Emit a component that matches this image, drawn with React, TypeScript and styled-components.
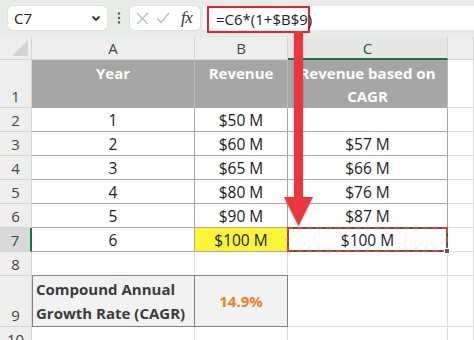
import React from 'react';
import styled, { createGlobalStyle, css } from 'styled-components';

const GlobalStyle = createGlobalStyle`
  html, body { margin: 0; padding: 0; background: #ffffff; }
  body { font-family: 'Open Sans', 'Noto Sans', sans-serif; overflow: hidden; }
  * { box-sizing: border-box; }
`;

const Page = styled.div`
  position: relative;
  width: 474px;
  height: 340px;
  overflow: hidden;
  background: #ffffff;
`;

const TopBar = styled.div`
  height: 37px;
  background: #e8ece8;
  display: flex;
  align-items: flex-start;
  padding: 6px 0 0 8px;
`;

const NameBox = styled.div`
  width: 99px;
  height: 24px;
  background: #ffffff;
  border-radius: 5px;
  box-shadow: 0 0 0 1px #dfe3df;
  display: flex;
  align-items: center;
  justify-content: space-between;
  padding: 0 6px 0 6px;
  font-size: 15px;
  color: #222;
`;

const Dots = styled.div`
  width: 23px;
  height: 24px;
  display: flex;
  align-items: center;
  justify-content: center;
`;

const FxBox = styled.div`
  width: 70px;
  height: 24px;
  background: #ffffff;
  border-radius: 5px;
  box-shadow: 0 0 0 1px #dfe3df;
  display: flex;
  align-items: center;
  padding: 0 4px 0 6px;
  gap: 7px;
`;

const FxLabel = styled.span`
  font-family: 'Liberation Serif', 'DejaVu Serif', serif;
  font-style: italic;
  font-size: 17px;
  color: #333;
  margin-left: 4px;
  letter-spacing: -0.5px;
`;

const FormulaArea = styled.div`
  flex: 1;
  height: 24px;
  margin-left: 3px;
  background: #ffffff;
  display: flex;
  align-items: center;
  padding-left: 4px;
`;

const FormulaHighlight = styled.div`
  height: 27px;
  width: 103px;
  border: 2.5px solid #e0262c;
  display: flex;
  align-items: center;
  padding-left: 7px;
  font-size: 15px;
  color: #222;
  white-space: nowrap;
  margin-top: 2px;
`;

const Sheet = styled.div`
  display: grid;
  grid-template-columns: 32px 163px 93px 160px 1fr;
  grid-template-rows: 23px 48px repeat(7, 24px) 51px 24px;
`;

const Corner = styled.div`
  position: relative;
  background: #eeeeee;
  border-right: 1px solid #d4d4d4;
  border-bottom: 1px solid #d4d4d4;
  &::after {
    content: '';
    position: absolute;
    right: 3px;
    bottom: 3px;
    width: 0;
    height: 0;
    border-left: 16px solid transparent;
    border-bottom: 16px solid #d3d3d3;
  }
`;

const ColHead = styled.div<{ $selected?: boolean }>`
  background: #eeeeee;
  border-right: 1px solid #d4d4d4;
  border-bottom: 1px solid #d4d4d4;
  display: flex;
  align-items: center;
  justify-content: center;
  font-size: 15px;
  color: #444;
  ${(p) =>
    p.$selected &&
    css`
      background: #e6e6e6;
      border-bottom: 2px solid #1e7145;
      color: #1e5c3a;
    `}
`;

const RowHead = styled.div<{ $selected?: boolean }>`
  background: #eeeeee;
  border-right: 1px solid #d4d4d4;
  border-bottom: 1px solid #d4d4d4;
  display: flex;
  align-items: flex-end;
  justify-content: center;
  padding-bottom: 1px;
  font-size: 15px;
  line-height: 20px;
  color: #444;
  ${(p) =>
    p.$selected &&
    css`
      background: #d9d9d9;
      border-right: 2px solid #1e7145;
    `}
`;

const HeadCell = styled.div`
  background: #a6a6a6;
  border-right: 1px solid #bdbdbd;
  color: #ffffff;
  font-weight: 700;
  font-size: 15px;
  line-height: 23px;
  text-align: center;
  padding: 2px 4px 0;
`;

const DataCell = styled.div<{ $bg?: string }>`
  background: ${(p) => p.$bg || '#ffffff'};
  border-right: 1px solid #a8a8a8;
  border-bottom: 1px solid #a8a8a8;
  display: flex;
  align-items: center;
  justify-content: center;
  font-size: 15.5px;
  color: #222;
`;

const CopyCell = styled(DataCell)`
  position: relative;
  border: 2px solid #2f6b40;
  margin: -1px 0 0 -1px;
  &::after {
    content: '';
    position: absolute;
    inset: -2px;
    border: 2px dashed #e2383d;
  }
`;

const FillHandle = styled.span`
  position: absolute;
  right: -4px;
  bottom: -4px;
  width: 6px;
  height: 6px;
  background: #5b5b5b;
  border: 1px solid #ffffff;
  z-index: 2;
`;

const Blank = styled.div`
  border-right: 1px solid #dcdcdc;
  border-bottom: 1px solid #dcdcdc;
`;

const LabelCell = styled.div`
  background: #f2f2f2;
  border: 1px solid #808080;
  margin-top: -1px;
  font-weight: 700;
  font-size: 15px;
  line-height: 24px;
  color: #3b3b3b;
  padding: 1px 0 0 3px;
  white-space: nowrap;
  overflow: hidden;
`;

const ValueCell = styled.div`
  background: #f2f2f2;
  border: 1px solid #808080;
  border-left: none;
  margin-top: -1px;
  display: flex;
  align-items: center;
  justify-content: center;
  font-weight: 700;
  font-size: 15px;
  color: #ee7d22;
`;

const ArrowSvg = styled.svg`
  position: absolute;
  left: 282px;
  top: 31px;
`;

const data = [
  { year: '1', rev: '$50 M', cagr: '' },
  { year: '2', rev: '$60 M', cagr: '$57 M' },
  { year: '3', rev: '$65 M', cagr: '$66 M' },
  { year: '4', rev: '$80 M', cagr: '$76 M' },
  { year: '5', rev: '$90 M', cagr: '$87 M' },
  { year: '6', rev: '$100 M', cagr: '$100 M' },
];

export default function App() {
  return (
    <Page>
      <GlobalStyle />
      <TopBar>
        <NameBox>
          <span>C7</span>
          <svg width="10" height="7" viewBox="0 0 10 7">
            <path d="M1.5 1.5 L5 5 L8.5 1.5" fill="none" stroke="#333" strokeWidth="1.8" />
          </svg>
        </NameBox>
        <Dots>
          <svg width="4" height="12" viewBox="0 0 4 12">
            <circle cx="2" cy="1.5" r="1.2" fill="#555" />
            <circle cx="2" cy="6" r="1.2" fill="#555" />
            <circle cx="2" cy="10.5" r="1.2" fill="#555" />
          </svg>
        </Dots>
        <FxBox>
          <svg width="13" height="13" viewBox="0 0 13 13">
            <path d="M1 1 L12 12 M12 1 L1 12" stroke="#b9b9b9" strokeWidth="1.2" fill="none" />
          </svg>
          <svg width="14" height="12" viewBox="0 0 14 12">
            <path d="M1 6.5 L5 10.5 L13 1" stroke="#b9b9b9" strokeWidth="1.2" fill="none" />
          </svg>
          <FxLabel>fx</FxLabel>
        </FxBox>
        <FormulaArea>
          <FormulaHighlight>=C6*(1+$B$9)</FormulaHighlight>
        </FormulaArea>
      </TopBar>
      <Sheet>
        <Corner />
        <ColHead>A</ColHead>
        <ColHead>B</ColHead>
        <ColHead $selected>C</ColHead>
        <ColHead />

        <RowHead>1</RowHead>
        <HeadCell>Year</HeadCell>
        <HeadCell>Revenue</HeadCell>
        <HeadCell>Revenue based on CAGR</HeadCell>
        <Blank />

        {data.map((d, i) => {
          const last = i === data.length - 1;
          return (
            <React.Fragment key={d.year}>
              <RowHead $selected={last}>{i + 2}</RowHead>
              <DataCell>{d.year}</DataCell>
              <DataCell $bg={last ? '#fdf43a' : undefined}>{d.rev}</DataCell>
              {last ? (
                <CopyCell>
                  {d.cagr}
                  <FillHandle />
                </CopyCell>
              ) : (
                <DataCell>{d.cagr}</DataCell>
              )}
              <Blank />
            </React.Fragment>
          );
        })}

        <RowHead>8</RowHead>
        <Blank />
        <Blank />
        <Blank />
        <Blank />

        <RowHead>9</RowHead>
        <LabelCell>
          Compound Annual
          <br />
          Growth Rate (CAGR)
        </LabelCell>
        <ValueCell>14.9%</ValueCell>
        <Blank />
        <Blank />

        <RowHead>10</RowHead>
        <Blank />
        <Blank />
        <Blank />
        <Blank />
      </Sheet>
      <ArrowSvg width="34" height="200" viewBox="0 0 34 200">
        <defs>
          <filter id="sh" x="-30%" y="-5%" width="160%" height="110%">
            <feDropShadow dx="0" dy="1" stdDeviation="1" floodColor="#000" floodOpacity="0.25" />
          </filter>
        </defs>
        <g filter="url(#sh)">
          <rect x="12" y="0" width="9" height="167" fill="#e8383d" />
          <polygon points="2,166 31,166 16.5,195" fill="#e8383d" />
        </g>
      </ArrowSvg>
    </Page>
  );
}
